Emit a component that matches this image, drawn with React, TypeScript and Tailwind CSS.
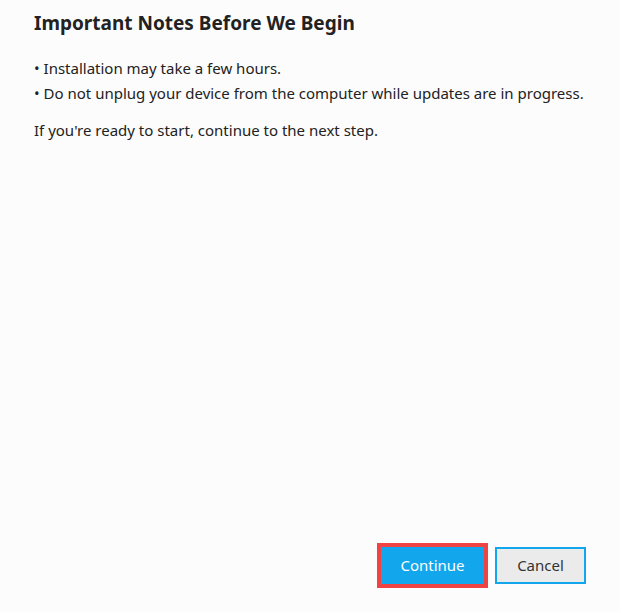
export default function App() {
  return (
    <div
      className="w-[620px] h-[612px] bg-[#fcfcfc] flex flex-col px-[34px] pt-[10px] pb-[28px] text-[#222222]"
      style={{ fontFamily: '"Noto Sans", "Open Sans", sans-serif' }}
    >
      <h1 className="text-[19px] font-bold leading-[26px]">Important Notes Before We Begin</h1>

      <ul className="mt-[20px] text-[15px] leading-[25px]">
        <li>• Installation may take a few hours.</li>
        <li>• Do not unplug your device from the computer while updates are in progress.</li>
      </ul>
      <p className="mt-[12px] text-[15px] leading-[25px]">If you're ready to start, continue to the next step.</p>

      <div className="mt-auto flex justify-end gap-[11px]">
        <button className="w-[103px] h-[37px] bg-[#12a6ec] text-white text-[15px] outline-4 outline-[#f04444]">
          Continue
        </button>
        <button className="w-[91px] h-[37px] bg-[#ebebeb] border-2 border-[#12a6ec] text-[#333333] text-[15px]">
          Cancel
        </button>
      </div>
    </div>
  );
}
